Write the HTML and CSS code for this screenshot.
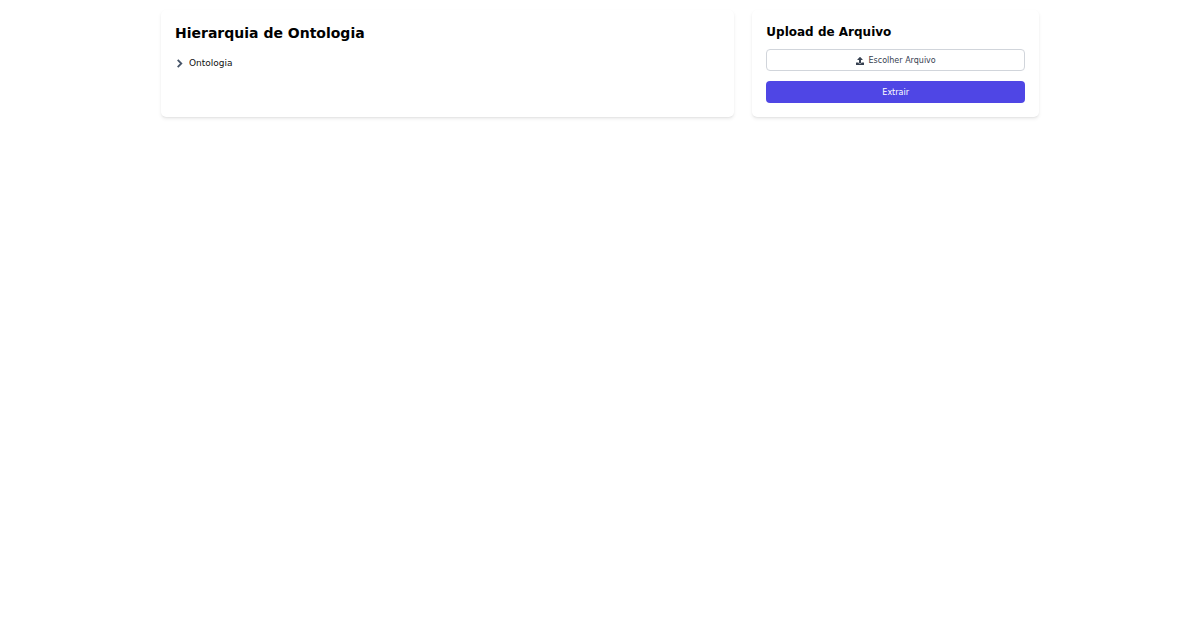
FILE: index.html
```html
<!DOCTYPE html>
<html lang="pt-BR">
<head>
  <meta charset="UTF-8" />
  <meta name="viewport" content="width=device-width, initial-scale=1.0"/>
  <title>Hierarquia de Ontologia</title>
  <link rel="stylesheet" href="styles.css">
</head>
<body>

  <main class="container">
    <section class="card">
      <h1>Hierarquia de Ontologia</h1>
      <ul class="tree">
        <li>
          <button type="button" class="tree-node" aria-expanded="false">
            <svg class="chevron" viewBox="0 0 10 10" aria-hidden="true">
              <path d="M3 1 L7 5 L3 9" />
            </svg>
            <span>Ontologia</span>
          </button>
        </li>
      </ul>
    </section>

    <section class="card">
      <h2>Upload de Arquivo</h2>
      <form class="upload-form">
        <button type="button" class="btn btn-file" id="fileBtn">
          <svg class="upload-icon" viewBox="0 0 512 512" aria-hidden="true">
            <path d="M296 384h-80c-13.300 0-24-10.700-24-24V192h-87.700c-17.800 0-26.700-21.500-14.100-34.100L242.300 5.700c7.500-7.500 19.800-7.500 27.300 0l152.200 152.200c12.600 12.600 3.700 34.100-14.100 34.100H320v168c0 13.300-10.700 24-24 24zm216-8v112c0 13.300-10.700 24-24 24H24c-13.300 0-24-10.700-24-24V376c0-13.300 10.700-24 24-24h136v8c0 30.900 25.100 56 56 56h80c30.900 0 56-25.100 56-56v-8h136c13.300 0 24 10.700 24 24z" />
          </svg>
          Escolher Arquivo
        </button>
        <input type="file" id="fileInput" aria-label="Escolher Arquivo" hidden>
        <button type="submit" class="btn btn-primary">Extrair</button>
      </form>
    </section>
  </main>

  <script>
    // Open the file picker
    document.getElementById("fileBtn").addEventListener("click", () => {
      document.getElementById("fileInput").click();
    });
  </script>

</body>
</html>
```
FILE: styles.css
```css
* {
  box-sizing: border-box;
}

body {
  margin: 0;
  font-family: "DejaVu Sans", sans-serif;
  font-size: 9px;
  color: #000;
  background-color: #fff;
}

.container {
  display: grid;
  grid-template-columns: 2fr 1fr;
  gap: 18px;
  max-width: 896px;
  margin: 0 auto;
  padding: 10px 9px;
}

.card {
  padding: 14px;
  background-color: #fff;
  border-radius: 5px;
  box-shadow: 0 2px 4px -1px rgba(0,0,0,0.12), 0 1px 2px -1px rgba(0,0,0,0.1);
}

h1 {
  margin: 0 0 14px;
  font-size: 14px;
  line-height: 18px;
}

h2 {
  margin: 0 0 8px;
  font-size: 12px;
  line-height: 17px;
}

.tree {
  margin: 0;
  padding: 0;
  list-style: none;
}

.tree-node {
  display: flex;
  align-items: center;
  gap: 5px;
  padding: 0;
  border: none;
  background: none;
  color: #111;
  font: inherit;
  line-height: 15px;
  cursor: pointer;
}

.chevron {
  width: 9px;
  height: 9px;
  fill: none;
  stroke: #475569;
  stroke-width: 2;
}

.upload-form {
  display: grid;
  gap: 10px;
}

.btn {
  display: flex;
  align-items: center;
  justify-content: center;
  gap: 5px;
  padding: 5px 9px 3px;
  border: 1px solid transparent;
  border-radius: 4px;
  font-family: inherit;
  font-size: 8px;
  line-height: 12px;
  cursor: pointer;
}

.btn-file {
  border-color: #d1d5db;
  background-color: #fff;
  color: #374151;
}

.btn-primary {
  background-color: #4f46e5;
  color: #fff;
}

.upload-icon {
  width: 8px;
  height: 8px;
  fill: #374151;
}
```
